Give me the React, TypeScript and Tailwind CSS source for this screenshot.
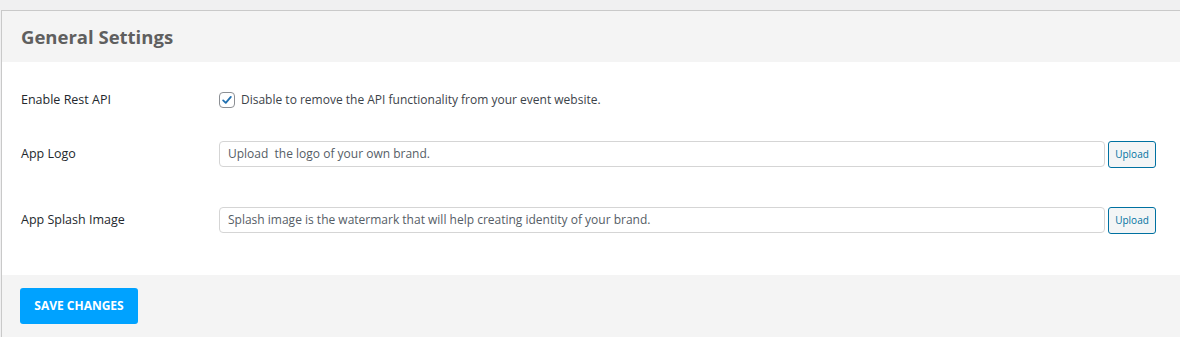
import React from "react";

const font = { fontFamily: '"Open Sans", "Noto Sans", sans-serif' };

function Check() {
  return (
    <span className="flex h-[16px] w-[16px] items-center justify-center rounded-[4px] border border-[#8c8f94] bg-white">
      <svg viewBox="0 0 20 20" className="h-[14px] w-[14px]">
        <path d="M4.5 10.5 L8.2 14 L15.5 5.5" fill="none" stroke="#2271b1" strokeWidth="2.6" strokeLinecap="round" strokeLinejoin="round" />
      </svg>
    </span>
  );
}

function UploadRow({ label, placeholder }: { label: string; placeholder: string }) {
  return (
    <div className="flex h-[26px] items-center">
      <div className="w-[217px] pl-[19px] text-[12.5px] font-medium text-[#23282d]">{label}</div>
      <div className="flex h-[26px] w-[886px] items-center rounded-[4px] border border-[#d5d5d5] bg-white pl-[8px] text-[12px] text-[#555d66] whitespace-pre">
        {placeholder}
      </div>
      <button className="ml-[3px] flex h-[27px] w-[48px] items-center justify-center rounded-[3px] border border-[#0071a1] bg-[#f3f5f6] text-[10px] text-[#0071a1]">
        Upload
      </button>
    </div>
  );
}

export default function App() {
  return (
    <div className="h-[337px] w-[1180px] overflow-hidden bg-[#f0f0f1] pt-[10px] pl-[1px]" style={font}>
      <div className="border-t border-l border-[#c9c9c9] bg-white">
        <div className="flex h-[51px] items-center bg-[#f4f4f4] pl-[19px] text-[18.5px] font-bold text-[#5f5f5f]">
          General Settings
        </div>
        <div className="pt-[25px] pb-[42px]">
          <div className="flex h-[26px] items-center">
            <div className="w-[217px] pl-[19px] text-[12.5px] font-medium text-[#23282d]">Enable Rest API</div>
            <Check />
            <span className="ml-[6px] text-[12px] text-[#3c434a]">
              Disable to remove the API functionality from your event website.
            </span>
          </div>
          <div className="mt-[28px]">
            <UploadRow label="App Logo" placeholder="Upload  the logo of your own brand." />
          </div>
          <div className="mt-[40px]">
            <UploadRow label="App Splash Image" placeholder="Splash image is the watermark that will help creating identity of your brand." />
          </div>
        </div>
        <div className="h-[62px] bg-[#f4f4f4] pt-[13px] pl-[18px]">
          <button className="flex h-[36px] w-[118px] items-center justify-center rounded-[3px] bg-[#00a2ff] text-[12px] font-bold uppercase text-white">
            Save Changes
          </button>
        </div>
      </div>
    </div>
  );
}
